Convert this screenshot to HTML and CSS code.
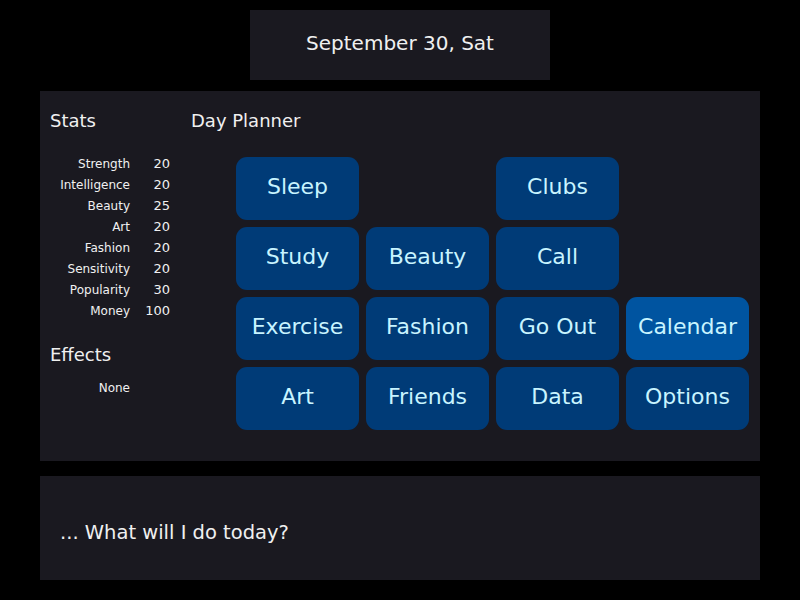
FILE: index.html
```html
<!DOCTYPE html>
<html lang="en">
    <head>
        <meta charset="utf-8" />
        <title>Day Planner</title>
        <link rel="stylesheet" href="styles.css">
    </head>
    <body>
        <header class="date">September 30, Sat</header>

        <main class="panel">
            <section class="stats">
                <h2>Stats</h2>
                <table>
                    <tr><td>Strength</td><td>20</td></tr>
                    <tr><td>Intelligence</td><td>20</td></tr>
                    <tr><td>Beauty</td><td>25</td></tr>
                    <tr><td>Art</td><td>20</td></tr>
                    <tr><td>Fashion</td><td>20</td></tr>
                    <tr><td>Sensitivity</td><td>20</td></tr>
                    <tr><td>Popularity</td><td>30</td></tr>
                    <tr><td>Money</td><td>100</td></tr>
                </table>
                <h2 class="effects">Effects</h2>
                <p class="none">None</p>
            </section>

            <section class="planner">
                <h2>Day Planner</h2>
                <div class="grid">
                    <button>Sleep</button>
                    <span></span>
                    <button>Clubs</button>
                    <span></span>
                    <button>Study</button>
                    <button>Beauty</button>
                    <button>Call</button>
                    <span></span>
                    <button>Exercise</button>
                    <button>Fashion</button>
                    <button>Go Out</button>
                    <button class="active">Calendar</button>
                    <button>Art</button>
                    <button>Friends</button>
                    <button>Data</button>
                    <button>Options</button>
                </div>
            </section>
        </main>

        <footer class="say">... What will I do today?</footer>
    </body>
</html>
```

FILE: styles.css
```css
* { margin: 0; padding: 0; box-sizing: border-box; }
body {
    background: #000;
    font-family: "DejaVu Sans", sans-serif;
    color: #f0f0f0;
    width: 800px;
    height: 600px;
    overflow: hidden;
}

.date {
    width: 300px;
    height: 70px;
    margin: 10px auto 0 auto;
    padding-bottom: 4px;
    background: #1a1920;
    font-size: 20px;
    display: flex;
    align-items: center;
    justify-content: center;
}

.panel {
    margin: 11px 40px 0 40px;
    height: 370px;
    background: #1a1920;
    padding: 19px 10px 0 10px;
    display: flex;
}

h2 { font-weight: normal; font-size: 18px; line-height: 22px; }

.stats { width: 141px; }
.stats table { border-collapse: collapse; margin-top: 21px; font-size: 12px; }
.stats td { height: 21px; padding: 0; text-align: right; }
.stats td:nth-child(1) { width: 80px; }
.stats td:nth-child(2) { width: 40px; font-size: 13px; }
.effects { margin-top: 23px; }
.none { width: 80px; text-align: right; font-size: 12px; margin-top: 15px; }

.planner { flex: 1; }
.grid {
    margin: 25px 0 0 45px;
    display: grid;
    grid-template-columns: repeat(4, 123px);
    grid-auto-rows: 63px;
    gap: 7px;
}
.grid button {
    border: none;
    border-radius: 11px;
    background: #003b77;
    color: #c8f4ff;
    font-family: "DejaVu Sans", sans-serif;
    font-size: 22px;
    padding-bottom: 4px;
}
.grid button.active { background: #0054a0; }

.say {
    margin: 15px 40px 0 40px;
    height: 104px;
    background: #1a1920;
    font-size: 19.5px;
    padding: 8px 0 0 20px;
    display: flex;
    align-items: center;
}
```
